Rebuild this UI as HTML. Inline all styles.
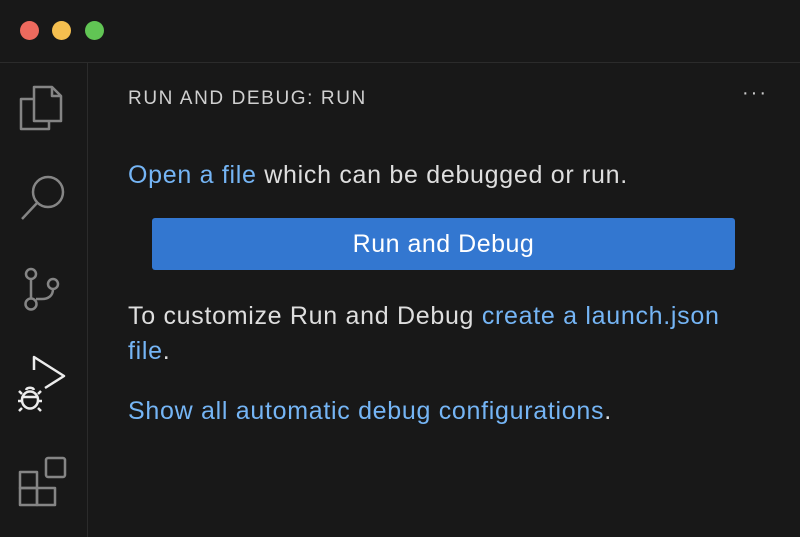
<!DOCTYPE html>
<html><head><style>
body{margin:0;width:800px;height:537px;background:#181818;font-family:"Liberation Sans",sans-serif;overflow:hidden;position:relative}
.title{position:absolute;left:0;top:0;width:800px;height:62px;border-bottom:1px solid #2b2b2b;background:#181818}
.dot{position:absolute;top:21px;width:19px;height:19px;border-radius:50%}
.side{position:absolute;left:0;top:63px;width:87px;height:474px;border-right:1px solid #2b2b2b}
a{color:#75b5f5;text-decoration:none}
.t{position:absolute;white-space:nowrap;letter-spacing:0.7px}
</style></head><body>
<div class="title">
<div class="dot" style="left:20px;background:#ed6a5e"></div>
<div class="dot" style="left:52px;background:#f5bf4f"></div>
<div class="dot" style="left:85px;background:#61c554"></div>
</div>
<div class="side"></div>
<svg style="position:absolute;left:0;top:0" width="87" height="537" fill="none" stroke="#858585" stroke-width="2.5" stroke-linejoin="round">
<path d="M34 87h18l9 9v25H34z"/>
<path d="M52 87v9h9"/>
<path d="M34 99H21v30h28v-8"/>
<circle cx="48" cy="192" r="15"/>
<path d="M37 203L22 219"/>
<circle cx="31" cy="274" r="5"/><circle cx="31" cy="304" r="5.5"/><circle cx="53" cy="284" r="5"/>
<path d="M31 279v19M53 289c0 7-5 10-11 10H36"/>
<g stroke="#ececec">
<path d="M34 370v-13l30 19-19 12"/>
<ellipse cx="30" cy="400" rx="8" ry="8.5"/>
<path d="M22 394l-3-3M38 394l3-3M18 401h4M38 401h4M22 408l-3 3M38 408l3 3M22 397h16M26 390c1-3 7-3 8 0"/>
</g>
<rect x="20" y="472" width="17" height="16"/>
<rect x="20" y="488" width="17" height="17"/>
<rect x="37" y="488" width="18" height="17"/>
<rect x="46" y="458" width="19" height="19" rx="2"/>
</svg>
<div class="t" style="left:128px;top:88px;font-size:19px;color:#d0d0d0;letter-spacing:1.6px">RUN AND DEBUG: RUN</div>
<div class="t" style="left:742px;top:82px;font-size:20px;color:#ccc;letter-spacing:2px">···</div>
<div class="t" style="left:128px;top:161px;font-size:25px;color:#dedede"><a>Open a file</a> which can be debugged or run.</div>
<div style="position:absolute;left:152px;top:218px;width:583px;height:52px;background:#3377d0;border-radius:3px;color:#fff;font-size:25px;text-align:center;line-height:52px;letter-spacing:0.5px">Run and Debug</div>
<div class="t" style="left:128px;top:299px;font-size:25px;color:#dedede;line-height:35px">To customize Run and Debug <a>create a launch.json</a><br><a>file</a>.</div>
<div class="t" style="left:128px;top:397px;font-size:25px;color:#dedede"><a>Show all automatic debug configurations</a>.</div>
</body></html>
